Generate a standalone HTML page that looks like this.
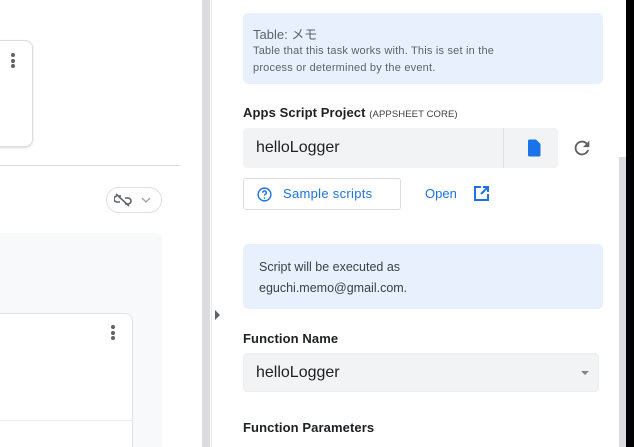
<!DOCTYPE html>
<html><head><style>
*{margin:0;padding:0;box-sizing:border-box}
html,body{width:634px;height:447px;overflow:hidden}
body{background:#fff;font-family:"Liberation Sans","Noto Sans CJK JP",sans-serif;position:relative}
.a{position:absolute}
.dots span{display:block;width:4px;height:4px;border-radius:50%;background:#5f6368;margin-bottom:1.5px}
.lbl{font-size:13px;font-weight:bold;color:#202124;letter-spacing:.1px}
</style></head><body>
<div class="a" style="left:-10px;top:40px;width:43px;height:107px;border:1px solid #dadce0;border-radius:8px;box-shadow:0 1px 2px rgba(0,0,0,.15)"></div>
<div class="a dots" style="left:11px;top:53px"><span></span><span></span><span></span></div>
<div class="a" style="left:0;top:165px;width:180px;height:1px;background:#dadce0"></div>
<div class="a" style="left:106px;top:187px;width:56px;height:26px;border:1px solid #e0e0e0;border-radius:13px"></div>
<svg class="a" style="left:114px;top:192px" width="18" height="16" viewBox="0 0 18 16"><path d="M4 4h3M3 4a3 3 0 0 0 0 6h3M11 6h3a3 3 0 0 1 0 6h-3M2 2l13 12" stroke="#5f6368" stroke-width="1.6" fill="none"/></svg>
<svg class="a" style="left:140px;top:195px" width="12" height="10"><path d="M2 3l4 4 4-4" stroke="#9aa0a6" stroke-width="1.3" fill="none"/></svg>
<div class="a" style="left:-10px;top:233px;width:172px;height:214px;background:#f8f9fa;border-radius:6px 6px 0 0"></div>
<div class="a" style="left:-10px;top:313px;width:143px;height:134px;background:#fff;border:1px solid #e3e3e3;border-bottom:none;border-radius:8px 8px 0 0"></div>
<div class="a" style="left:0;top:420px;width:132px;height:1px;background:#eceff1"></div>
<div class="a dots" style="left:111px;top:325px"><span></span><span></span><span></span></div>
<div class="a" style="left:202px;top:0;width:8px;height:447px;background:#dadce0"></div>
<div class="a" style="left:211px;top:0;width:1px;height:447px;background:#e8eaed"></div>
<div class="a" style="left:215px;top:310px;width:0;height:0;border-left:5px solid #5f6368;border-top:5px solid transparent;border-bottom:5px solid transparent"></div>
<div class="a" style="left:619px;top:157px;width:7px;height:290px;background:#dadce0"></div>
<div class="a" style="left:626px;top:0;width:8px;height:447px;background:#000"></div>
<div class="a" style="left:243px;top:13px;width:360px;height:71px;background:#e8f0fe;border-radius:5px"></div>
<div class="a" style="left:253px;top:24px;font-size:13px;color:#5f6368">Table: メモ</div>
<div class="a" style="left:253px;top:43px;font-size:11px;line-height:17px;color:#5f6368;width:272px;letter-spacing:.2px">Table that this task works with. This is set in the process or determined by the event.</div>
<div class="a lbl" style="left:243px;top:105px">Apps Script Project <span style="font-size:9.5px;font-weight:normal;color:#3c4043">(APPSHEET CORE)</span></div>
<div class="a" style="left:243px;top:128px;width:315px;height:40px;background:#f1f3f4;border-radius:4px"></div>
<div class="a" style="left:503px;top:128px;width:1px;height:40px;background:#e0e0e0"></div>
<div class="a" style="left:256px;top:139px;font-size:16px;color:#202124">helloLogger</div>
<svg class="a" style="left:527px;top:139px" width="14" height="18" viewBox="0 0 14 18"><path d="M1 2a1.5 1.5 0 0 1 1.5-1.5H9l4.5 4.5v11a1.5 1.5 0 0 1-1.5 1.5H2.5A1.5 1.5 0 0 1 1 16z" fill="#1a73e8"/></svg>
<svg class="a" style="left:571px;top:137px" width="22" height="22" viewBox="0 0 24 24"><path d="M17.65 6.35A7.96 7.96 0 0 0 12 4a8 8 0 1 0 7.73 10h-2.08A6 6 0 1 1 12 6c1.66 0 3.14.69 4.22 1.78L13 11h7V4z" fill="#5f6368"/></svg>
<div class="a" style="left:243px;top:178px;width:158px;height:32px;border:1px solid #dadce0;border-radius:3px"></div>
<svg class="a" style="left:256px;top:186px" width="17" height="17" viewBox="0 0 24 24"><circle cx="12" cy="12" r="9" stroke="#1a73e8" stroke-width="2" fill="none"/><path d="M9.5 9.5a2.5 2.5 0 1 1 3.5 2.3c-.7.4-1 .9-1 1.7" stroke="#1a73e8" stroke-width="2" fill="none"/><circle cx="12" cy="17" r="1.2" fill="#1a73e8"/></svg>
<div class="a" style="left:283px;top:186px;font-size:13px;color:#1a73e8;letter-spacing:.3px">Sample scripts</div>
<div class="a" style="left:425px;top:186px;font-size:13px;color:#1a73e8">Open</div>
<svg class="a" style="left:473px;top:185px" width="17" height="17" viewBox="0 0 17 17"><path d="M8 2H2v13h13V9M10 2h5v5M15 2L8 9" stroke="#1a73e8" stroke-width="2" fill="none"/></svg>
<div class="a" style="left:243px;top:244px;width:360px;height:65px;background:#e8f0fe;border-radius:5px"></div>
<div class="a" style="left:259px;top:257px;font-size:12.5px;line-height:21px;color:#3c4043">Script will be executed as<br>eguchi.memo@gmail.com.</div>
<div class="a lbl" style="left:243px;top:331px">Function Name</div>
<div class="a" style="left:243px;top:353px;width:356px;height:39px;background:#f1f3f4;border-radius:4px;border:1px solid #eceff1"></div>
<div class="a" style="left:256px;top:364px;font-size:16px;color:#202124">helloLogger</div>
<div class="a" style="left:581px;top:371px;width:0;height:0;border-top:4px solid #80868b;border-left:4px solid transparent;border-right:4px solid transparent"></div>
<div class="a lbl" style="left:243px;top:420px">Function Parameters</div>
</body></html>
